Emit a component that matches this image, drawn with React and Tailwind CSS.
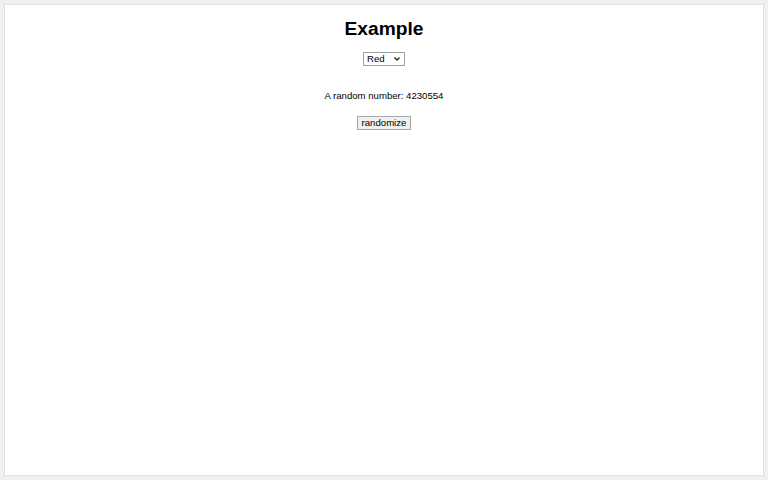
export default function App() {
  return (
    <div className="h-screen bg-[#f0f0f0] p-[4px] font-['Liberation_Sans',Arial,sans-serif] text-black">
      <div className="h-[472px] border border-[#dedede] bg-white flex flex-col items-center">
        <h1 className="mt-[13px] text-[19.2px] leading-[22px] font-bold">Example</h1>

        {/* colour picker */}
        <div className="mt-[12px] w-[42px] h-[14px] border border-[#a0a0a0] bg-white flex items-center justify-between pl-[3px] pr-[4px] text-[9.6px] leading-none">
          <span>Red</span>
          <svg width="6" height="4" viewBox="0 0 6 4" fill="none" stroke="#222" strokeWidth="1.3">
            <path d="M0.5 0.5 L3 3 L5.5 0.5" />
          </svg>
        </div>

        <p className="mt-[24px] text-[9.6px] leading-[11px]">A random number: 4230554</p>

        <button className="mt-[15px] w-[54px] h-[14px] border border-[#a8a8a8] bg-[#f0f0f0] text-[9.6px] leading-none flex items-center justify-center">
          randomize
        </button>
      </div>
    </div>
  );
}
